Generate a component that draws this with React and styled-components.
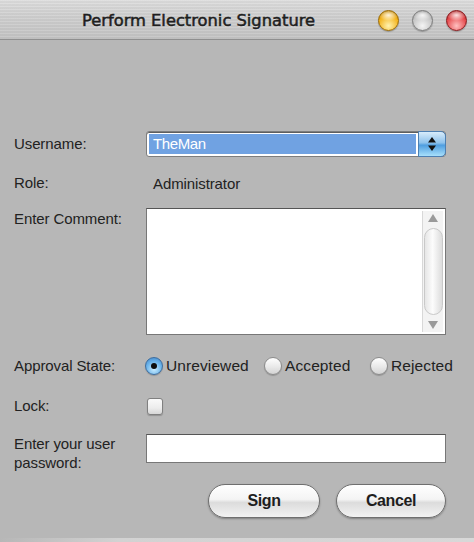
import styled, { createGlobalStyle } from 'styled-components';

const GlobalStyle = createGlobalStyle`
    html, body {
        margin: 0;
        padding: 0;
        background: #b7b7b7;
    }
    body {
        font-family: "Liberation Sans", Arial, sans-serif;
    }
`;

const lights = {
    yellow: ['#fff3b0', '#f3b21a', '#9c6a00'],
    gray: ['#f4f4f4', '#c4c4c4', '#7d7d7d'],
    red: ['#ffc0c0', '#e4474a', '#8a1518'],
};

const App = () => {
    return <Window>
        <GlobalStyle />
        <TitleBar>
            <Title>Perform Electronic Signature</Title>
            <Lights>
                <Light $color="yellow" />
                <Light $color="gray" />
                <Light $color="red" />
            </Lights>
        </TitleBar>

        <Form>
            <Row $top={91} $align="center">
                <Label>Username:</Label>
                <Select>
                    <SelectValue>TheMan</SelectValue>
                    <Stepper>
                        <svg width="10" height="16" viewBox="0 0 10 16">
                            <path d="M5 1 L9 6.5 L1 6.5 Z" fill="#111" />
                            <path d="M5 15 L9 9.5 L1 9.5 Z" fill="#111" />
                        </svg>
                    </Stepper>
                </Select>
            </Row>

            <Row $top={15} $align="center" $height={22}>
                <Label>Role:</Label>
                <Value>Administrator</Value>
            </Row>

            <Row $top={14} $align="start">
                <Label $pad={1}>Enter Comment:</Label>
                <TextArea>
                    <ScrollBar>
                        <ScrollArrow $up />
                        <Thumb />
                        <ScrollArrow />
                    </ScrollBar>
                </TextArea>
            </Row>

            <Row $top={20} $align="center" $height={22}>
                <Label>Approval State:</Label>
                <RadioGroup>
                    <RadioOption $width={119}><Radio $checked />Unreviewed</RadioOption>
                    <RadioOption $width={106}><Radio />Accepted</RadioOption>
                    <RadioOption><Radio />Rejected</RadioOption>
                </RadioGroup>
            </Row>

            <Row $top={19} $align="center" $height={20}>
                <Label>Lock:</Label>
                <Checkbox />
            </Row>

            <Row $top={16} $align="start">
                <Label $tight>Enter your user<br />password:</Label>
                <Input />
            </Row>

            <Buttons>
                <PillButton $width={112}>Sign</PillButton>
                <PillButton $width={110}>Cancel</PillButton>
            </Buttons>
        </Form>
        <BottomStrip />
    </Window>
}

const Window = styled.div`
    width: 474px;
    height: 542px;
    background: #b7b7b7;
    display: flex;
    flex-direction: column;
    overflow: hidden;
    color: #1d1d1d;
`;

const TitleBar = styled.div`
    height: 39px;
    border-bottom: 1px solid #8f8f8f;
    background:
        repeating-linear-gradient(180deg, rgba(255,255,255,0.08) 0 1px, rgba(0,0,0,0.03) 1px 3px),
        linear-gradient(180deg, #dedede 0%, #cfcfcf 45%, #c4c4c4 100%);
    display: flex;
    align-items: center;
`;

const Title = styled.div`
    flex: 1;
    padding-left: 82px;
    font-family: "DejaVu Sans", Verdana, sans-serif;
    font-size: 16.3px;
    font-weight: normal;
    -webkit-text-stroke: 0.55px #1e1e1e;
    color: #1e1e1e;
    text-shadow: 0 1px 0 rgba(255,255,255,0.5);
    margin-top: 2px;
`;

const Lights = styled.div`
    display: flex;
    gap: 13px;
    padding-right: 7px;
    margin-top: 1px;
`;

const Light = styled.span`
    width: 21px;
    height: 21px;
    border-radius: 50%;
    border: 1px solid ${p => lights[p.$color][2]};
    box-sizing: border-box;
    background:
        radial-gradient(ellipse 50% 30% at 50% 22%, rgba(255,255,255,0.85), rgba(255,255,255,0) 100%),
        radial-gradient(circle at 50% 78%, ${p => lights[p.$color][0]} 0%, ${p => lights[p.$color][1]} 60%, ${p => lights[p.$color][2]} 100%);
    box-shadow: 0 1px 1px rgba(0,0,0,0.25);
`;

const Form = styled.div`
    display: flex;
    flex-direction: column;
    padding: 0 28px 0 14px;
    flex: 1;
`;

const Row = styled.div`
    display: grid;
    grid-template-columns: 132px 300px;
    align-items: ${p => p.$align};
    margin-top: ${p => p.$top}px;
    height: ${p => p.$height ? `${p.$height}px` : 'auto'};
`;

const Label = styled.div`
    font-size: 15px;
    line-height: ${p => p.$tight ? '19px' : '20px'};
    color: #222;
    padding-top: ${p => p.$pad || 0}px;
    margin-top: ${p => p.$tight ? '2px' : '0'};
    letter-spacing: -0.1px;
`;

const Value = styled.div`
    font-size: 15px;
    padding-left: 7px;
    color: #222;
    letter-spacing: -0.1px;
`;

const Select = styled.div`
    height: 26px;
    border: 1px solid #7d7d7d;
    border-radius: 3px;
    background: #fff;
    display: flex;
    box-sizing: border-box;
    box-shadow: inset 0 1px 0 #5e5e5e;
`;

const SelectValue = styled.div`
    flex: 1;
    margin: 2px;
    background: #70a2e2;
    color: #fff;
    font-size: 15px;
    line-height: 20px;
    padding-left: 4px;
    letter-spacing: -0.4px;
`;

const Stepper = styled.div`
    width: 26px;
    margin: -1px -1px -1px 0;
    border-radius: 0 5px 5px 0;
    border: 1px solid #4d7fb2;
    background: linear-gradient(180deg, #d8ecfb 0%, #8ec2ec 45%, #4f9ee0 55%, #a8e0fb 100%);
    display: flex;
    align-items: center;
    justify-content: center;
`;

const TextArea = styled.div`
    height: 127px;
    box-sizing: border-box;
    border: 1px solid #777;
    border-top-color: #555;
    background: #fff;
    display: flex;
    justify-content: flex-end;
    padding: 2px 2px 2px 0;
`;

const ScrollBar = styled.div`
    width: 21px;
    background: #f3f3f3;
    border-left: 1px solid #d8d8d8;
    display: flex;
    flex-direction: column;
    align-items: center;
    justify-content: space-between;
    padding: 3px 0;
    box-sizing: border-box;
`;

const ScrollArrow = styled.span`
    width: 0;
    height: 0;
    border-left: 5px solid transparent;
    border-right: 5px solid transparent;
    ${p => p.$up ? 'border-bottom: 8px solid #9a9a9a;' : 'border-top: 8px solid #9a9a9a;'}
`;

const Thumb = styled.span`
    width: 19px;
    flex: 1;
    margin: 6px 0;
    border-radius: 10px;
    border: 1px solid #c9c9c9;
    box-sizing: border-box;
    background: linear-gradient(90deg, #e6e6e6 0%, #fcfcfc 45%, #dcdcdc 100%);
`;

const RadioGroup = styled.div`
    display: flex;
    align-items: center;
    margin-left: -1px;
    width: 320px;
`;

const RadioOption = styled.label`
    display: flex;
    align-items: center;
    gap: 3px;
    font-size: 15.5px;
    color: #222;
    letter-spacing: 0.1px;
    width: ${p => p.$width ? `${p.$width}px` : 'auto'};
    white-space: nowrap;
`;

const Radio = styled.span`
    width: 18px;
    height: 18px;
    border-radius: 50%;
    box-sizing: border-box;
    flex: none;
    position: relative;
    border: 1px solid ${p => p.$checked ? '#3d6d9f' : '#8c8c8c'};
    background: ${p => p.$checked
        ? 'radial-gradient(circle at 50% 70%, #c9ecff 0%, #6cb4ea 55%, #3a82c8 100%)'
        : 'linear-gradient(180deg, #ffffff 0%, #e9e9e9 55%, #d3d3d3 100%)'};
    box-shadow: 0 1px 1px rgba(0,0,0,0.2);

    &::after {
        content: '';
        display: ${p => p.$checked ? 'block' : 'none'};
        position: absolute;
        left: 5px;
        top: 5px;
        width: 6px;
        height: 6px;
        border-radius: 50%;
        background: #0d0d0d;
    }
`;

const Checkbox = styled.span`
    width: 16px;
    height: 17px;
    margin-left: 1px;
    box-sizing: border-box;
    border: 1px solid #808080;
    border-radius: 3px;
    background: linear-gradient(180deg, #fafafa 0%, #ececec 60%, #d6d6d6 100%);
    box-shadow: 0 1px 1px rgba(0,0,0,0.2);
`;

const Input = styled.div`
    height: 29px;
    margin-top: 2px;
    box-sizing: border-box;
    border: 1px solid #777;
    border-top-color: #555;
    background: #fff;
`;

const Buttons = styled.div`
    display: flex;
    justify-content: flex-end;
    gap: 16px;
    margin-top: 12px;
`;

const PillButton = styled.button`
    width: ${p => p.$width}px;
    height: 34px;
    border-radius: 17px;
    border: 1px solid #6f6f6f;
    background: linear-gradient(180deg, #ffffff 0%, #f4f4f4 45%, #dcdcdc 55%, #f2f2f2 100%);
    box-shadow: 0 1px 2px rgba(0,0,0,0.3);
    font-family: "Liberation Sans", Arial, sans-serif;
    font-size: 16px;
    font-weight: bold;
    color: #1e1e1e;
    letter-spacing: -0.4px;
    padding: 0;
`;

const BottomStrip = styled.div`
    height: 4px;
    background: linear-gradient(90deg, #b7b7b7 0%, #d2d2d2 25%, #d8d8d8 100%);
`;

export default App;
